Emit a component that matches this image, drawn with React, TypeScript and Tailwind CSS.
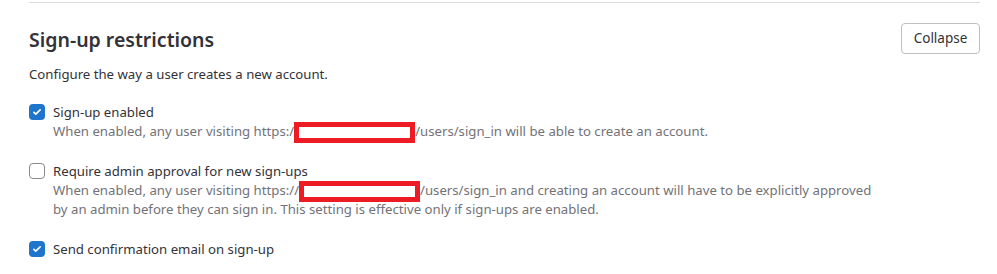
import React from 'react';

function Redacted({ className = '' }: { className?: string }) {
  return (
    <span
      className={`inline-block h-[21px] w-[121px] -my-2 border-[5px] border-[#ed1c24] bg-white align-middle ${className}`}
    />
  );
}

function Check({ checked }: { checked: boolean }) {
  if (checked) {
    return (
      <span className="mt-[2px] flex h-4 w-4 shrink-0 items-center justify-center rounded-[4px] bg-[#1f75cb]">
        <svg viewBox="0 0 16 16" className="h-[10px] w-[10px]" fill="none">
          <path
            d="M3 8.5l3 3 7-7"
            stroke="white"
            strokeWidth="2.6"
            strokeLinecap="round"
            strokeLinejoin="round"
          />
        </svg>
      </span>
    );
  }
  return (
    <span className="mt-[2px] h-4 w-4 shrink-0 rounded-[4px] border border-[#89888d] bg-white" />
  );
}

function Option({
  checked,
  label,
  children,
}: {
  checked: boolean;
  label: string;
  children?: React.ReactNode;
}) {
  return (
    <div className="flex gap-[8px]">
      <Check checked={checked} />
      <div>
        <div className="text-[13.2px] leading-[20px] text-[#333238]">{label}</div>
        {children && (
          <div className="text-[13.2px] leading-[19px] text-[#737278]">{children}</div>
        )}
      </div>
    </div>
  );
}

export default function App() {
  return (
    <div
      className="h-[274px] w-[997px] overflow-hidden bg-white pl-[29px] pr-[17px] pt-[2px]"
      style={{ fontFamily: '"Noto Sans", "Open Sans", sans-serif' }}
    >
      <div className="border-t border-[#dcdcde] pt-[20px]">
        <div className="flex items-start justify-between">
          <div>
            <h2 className="mt-[3px] text-[19.5px] font-semibold leading-[28px] text-[#333238]">
              Sign-up restrictions
            </h2>
            <p className="mt-[10px] text-[13.2px] leading-[20px] text-[#333238]">
              Configure the way a user creates a new account.
            </p>
          </div>
          <button className="h-[31px] w-[79px] rounded-[4px] border border-[#bfbfc3] text-[13.5px] text-[#333238]">
            Collapse
          </button>
        </div>

        <div className="mt-[18px] flex flex-col gap-[20px]">
          <Option checked label="Sign-up enabled">
            When enabled, any user visiting https:/
            <Redacted />
            /users/sign_in will be able to create an account.
          </Option>
          <Option checked={false} label="Require admin approval for new sign-ups">
            When enabled, any user visiting https://
            <Redacted className="h-[19px]" />
            /users/sign_in and creating an account will have to be explicitly approved
            <br />
            by an admin before they can sign in. This setting is effective only if sign-ups are
            enabled.
          </Option>
          <Option checked label="Send confirmation email on sign-up" />
        </div>
      </div>
    </div>
  );
}
